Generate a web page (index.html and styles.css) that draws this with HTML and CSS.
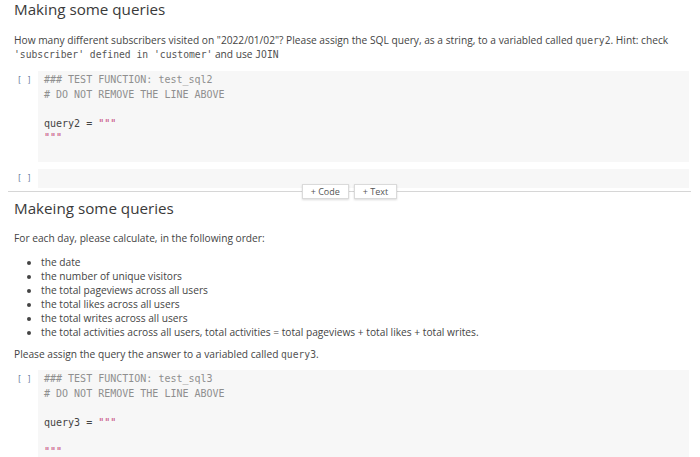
FILE: index.html
```html
<!DOCTYPE html>
<html>
<head>
<meta charset="utf-8">
<link rel="stylesheet" href="styles.css">
</head>
<body>
<div class="nb">
  <div class="text-cell first">
    <h2 class="title">Making some queries</h2>
    <p class="para">How many different subscribers visited on "2022/01/02"? Please assign the SQL query, as a string, to a variabled called <code>query2</code>. Hint: check <code>'subscriber' defined in 'customer'</code> and use <code>JOIN</code></p>
  </div>

  <div class="code-cell">
    <div class="prompt">[ ]</div>
    <pre class="code"><span class="cm">### TEST FUNCTION: test_sql2</span>
<span class="cm"># DO NOT REMOVE THE LINE ABOVE</span>

query2 = <span class="str">"""</span>
<span class="str">"""</span>
 </pre>
  </div>

  <div class="code-cell empty">
    <div class="prompt">[ ]</div>
    <pre class="code"> </pre>
  </div>

  <div class="divider">
    <span class="add-btn">+ Code</span>
    <span class="add-btn">+ Text</span>
  </div>

  <div class="text-cell second">
    <h2 class="title">Makeing some queries</h2>
    <p class="para">For each day, please calculate, in the following order:</p>
    <ul class="list">
      <li>the date</li>
      <li>the number of unique visitors</li>
      <li>the total pageviews across all users</li>
      <li>the total likes across all users</li>
      <li>the total writes across all users</li>
      <li>the total activities across all users, total activities = total pageviews + total likes + total writes.</li>
    </ul>
    <p class="para">Please assign the query the answer to a variabled called <code>query3</code>.</p>
  </div>

  <div class="code-cell last">
    <div class="prompt">[ ]</div>
    <pre class="code"><span class="cm">### TEST FUNCTION: test_sql3</span>
<span class="cm"># DO NOT REMOVE THE LINE ABOVE</span>

query3 = <span class="str">"""</span>

<span class="str">"""</span></pre>
  </div>
</div>
</body>
</html>
```

FILE: styles.css
```css
html, body {
  margin: 0;
  padding: 0;
  background: #ffffff;
  overflow: hidden;
}

.nb {
  width: 700px;
  height: 457px;
  overflow: hidden;
  font-family: "Open Sans", "Liberation Sans", sans-serif;
  color: #3c4043;
}

.text-cell {
  padding-left: 14px;
  padding-right: 20px;
}

.title {
  margin: 0;
  font-weight: 400;
  font-size: 15.2px;
  line-height: 20px;
  color: #3a3a3a;
}

.first .title {
  margin-top: -1px;
}

.para {
  margin: 14px 0 0 0;
  font-size: 10.2px;
  line-height: 13.5px;
  color: #444;
}

.first .para {
  margin-top: 15px;
}

.para code {
  font-family: "DejaVu Sans Mono", "Liberation Mono", monospace;
  font-size: 9.7px;
  color: #555;
}

.code-cell {
  display: flex;
  margin-top: 10px;
}

.prompt {
  width: 38px;
  box-sizing: border-box;
  padding-left: 17px;
  padding-top: 3px;
  font-family: "DejaVu Sans Mono", monospace;
  font-size: 8px;
  line-height: 14px;
  color: #6a7fa0;
  flex: none;
}

.code {
  flex: none;
  width: 651px;
  margin: 0;
  box-sizing: border-box;
  background: #f7f7f7;
  padding: 2px 0 2px 6px;
  font-family: "DejaVu Sans Mono", "Liberation Mono", monospace;
  font-size: 10px;
  line-height: 14.5px;
  color: #444;
  white-space: pre;
}

.cm {
  color: #8f8f8f;
}

.str {
  color: #c4477a;
}

.empty {
  margin-top: 7px;
}

.empty .code {
  height: 19px;
  padding: 0;
}

.divider {
  position: relative;
  margin: 3px 9px 0 8px;
  height: 1px;
  background: #d6d6d6;
  display: flex;
  justify-content: center;
  gap: 5px;
}

.add-btn {
  position: relative;
  top: -7px;
  height: 13px;
  padding: 0 8px;
  background: #fff;
  border: 1px solid #dadada;
  box-shadow: 0 1px 2px rgba(0,0,0,0.15);
  font-size: 9px;
  line-height: 13px;
  color: #555;
  white-space: nowrap;
}

.second {
  margin-top: 6px;
}

.list {
  margin: 9px 0 0 0;
  padding-left: 27px;
  font-size: 10.2px;
  line-height: 14px;
  color: #444;
}

.list + .para {
  margin-top: 9px;
}

.last {
  margin-top: 9px;
}
```
